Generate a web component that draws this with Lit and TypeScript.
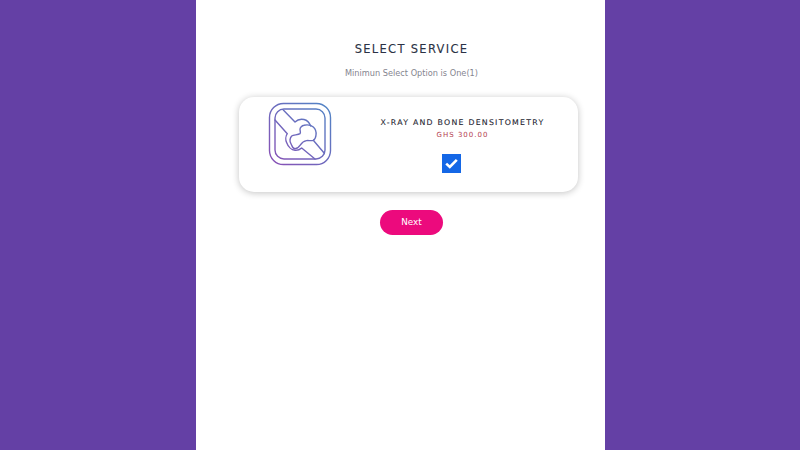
import { LitElement, html, css, svg } from "lit";
import { customElement } from "lit/decorators.js";

@customElement("app-root")
export class AppRoot extends LitElement {
  static styles = css`
    :host { display: block; width: 800px; height: 450px; overflow: hidden; background: #6440a5; font-family: "DejaVu Sans", "Liberation Sans", sans-serif; }
    .panel { box-sizing: border-box; width: 409px; height: 450px; margin-left: 196px; background: #fff; padding: 41px 21px 0 43px; display: flex; flex-direction: column; align-items: center; }
    h1 { margin: 0; font-size: 11.5px; line-height: 16px; font-weight: 400; letter-spacing: 1.3px; color: #2b3245; white-space: nowrap; -webkit-text-stroke: 0.1px #2b3245; }
    .sub { margin: 9px 0 0; font-size: 8.2px; line-height: 14px; color: #85858f; white-space: nowrap; }
    .card { box-sizing: border-box; align-self: flex-start; width: 339px; height: 95px; margin-top: 17px; background: #fff; border-radius: 15px; box-shadow: 0 1px 7px rgba(0,0,0,0.24); display: grid; grid-template-columns: 122px 1fr; }
    .icon { display: flex; justify-content: center; padding-top: 5px; }
    .icon svg { width: 64px; height: 64px; display: block; }
    .info { display: flex; flex-direction: column; align-items: center; padding: 20px 14px 0 0; }
    .name { font-size: 7.8px; line-height: 12px; font-weight: 400; letter-spacing: 1.25px; color: #23232f; white-space: nowrap; -webkit-text-stroke: 0.1px #23232f; }
    .price { margin-top: 1px; font-size: 7px; line-height: 11px; letter-spacing: 1px; color: #b4404f; white-space: nowrap; }
    .check { box-sizing: border-box; width: 19px; height: 19px; margin: 13px 22px 0 0; background: #1467e6; display: flex; align-items: center; justify-content: center; }
    .check svg { width: 13px; height: 11px; display: block; }
    .next { box-sizing: border-box; width: 63px; height: 25px; margin-top: 18px; border: 0; border-radius: 13px; background: #ec0a7d; color: #fff; font: 400 8.8px/25px "DejaVu Sans", "Liberation Sans", sans-serif; padding: 0; }
  `;

  render() {
    return html`
      <div class="panel">
        <h1>SELECT SERVICE</h1>
        <p class="sub">Minimun Select Option is One(1)</p>
        <div class="card">
          <div class="icon">
            <svg viewBox="0 0 64 64" fill="none" stroke="url(#g)" stroke-width="1.4" stroke-linecap="round" stroke-linejoin="round">
              ${svg`
                <defs>
                  <linearGradient id="g" gradientUnits="userSpaceOnUse" x1="2" y1="63" x2="62" y2="1">
                    <stop offset="0" stop-color="#8a4fb5" />
                    <stop offset="1" stop-color="#4f86c6" />
                  </linearGradient>
                </defs>
                <rect x="1.5" y="1.5" width="61" height="61" rx="14" />
                <rect x="7" y="7" width="50" height="50" rx="9" />
                <path d="M15.3 8 L27 20 C29 18 33 16.8 36 17.5 C39 18.2 41.5 21 42.7 24" />
                <path d="M45.3 38.3 L56.3 51.3" />
                <path d="M7 18 L19.3 31.7 C17.6 34 17.4 38 18.6 40.5 C20 44.5 23.5 48 27 48.3 C29.5 48.5 32 47.5 33.7 46 L47 57" />
                <path d="M32 27.3 C32 25.5 34 23.5 36 23.2 C39 22.6 43 23 45.3 25 C47.5 27 48.4 30 48 33 C47.8 35.5 47 37.3 45.3 38.3 C43.5 39 41 38.4 38.5 38.6 C36 39 34 40.5 32 43.3 C30.5 45.5 28.7 46.7 27 46.7 C25.5 46.7 24.3 45 23.7 43.3 C22.5 41 21.6 39.5 22 37.8 C22.3 35.8 23 34.7 23.7 34 C25.5 32.8 30 33 32 31.7 C33 30.5 32 29 32 27.3 Z" />
              `}
            </svg>
          </div>
          <div class="info">
            <div class="name">X-RAY AND BONE DENSITOMETRY</div>
            <div class="price">GHS 300.00</div>
            <div class="check">
              <svg viewBox="0 0 13 11" fill="none" stroke="#fff" stroke-width="2.6"><path d="M1.2 5.6 L4.8 9 L11.8 1.8" /></svg>
            </div>
          </div>
        </div>
        <button class="next">Next</button>
      </div>
    `;
  }
}
